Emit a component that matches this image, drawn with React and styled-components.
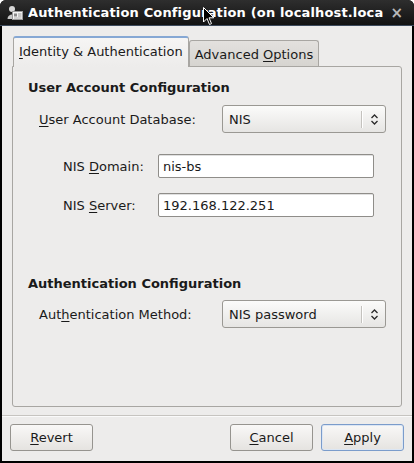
import React from "react";
import styled, { createGlobalStyle } from "styled-components";

const Global = createGlobalStyle`
  html, body { margin: 0; padding: 0; background: #ffffff; }
  #root { width: 414px; height: 463px; }
  * { box-sizing: border-box; }
`;

const Window = styled.div`
  position: relative;
  width: 414px;
  height: 463px;
  background: #000;
  border-radius: 6px 6px 0 0;
  display: flex;
  flex-direction: column;
  overflow: hidden;
  font-family: "DejaVu Sans", "Liberation Sans", sans-serif;
  font-size: 13px;
  color: #1a1a1a;
`;

const TitleBar = styled.div`
  height: 26px;
  flex: none;
  display: flex;
  align-items: center;
  padding: 0 8px 0 7px;
  background: linear-gradient(#2e2e2e, #121212);
  border-bottom: 1px solid #3c4a5c;
  color: #fff;
`;

const TitleText = styled.div`
  width: 360px;
  flex: none;
  margin-left: 5px;
  font-weight: bold;
  font-size: 13px;
  white-space: nowrap;
  overflow: hidden;
  letter-spacing: 0.15px;
`;

const Close = styled.div`
  flex: 1;
  color: #b8b8b8;
  font-size: 15px;
  font-weight: bold;
  text-align: right;
  padding-right: 3px;
`;

const Body = styled.div`
  flex: 1;
  margin: 0 2px 2px;
  background: #edeceb;
  display: flex;
  flex-direction: column;
  padding: 10px 8px 10px;
`;

const Notebook = styled.div`
  flex: 1;
  margin: 0 2px;
  display: flex;
  flex-direction: column;
`;

const TabRow = styled.div`
  display: flex;
  align-items: flex-end;
  padding-left: 1px;
  position: relative;
  z-index: 1;
`;

const Tab = styled.div`
  padding: 0 5px;
  border: 1px solid #a8a6a2;
  border-bottom: none;
  border-radius: 3px 3px 0 0;
  display: flex;
  align-items: center;
  white-space: nowrap;
  height: ${(p) => (p.$active ? "31px" : "26px")};
  margin-bottom: ${(p) => (p.$active ? "-1px" : "0")};
  background: ${(p) =>
    p.$active ? "linear-gradient(#f6f5f4, #edeceb)" : "linear-gradient(#e3e1de, #d6d4d0)"};
  border-top: ${(p) => (p.$active ? "2px solid #86a8d4" : "1px solid #a8a6a2")};
  padding-top: ${(p) => (p.$active ? "0" : "2px")};
  padding-bottom: ${(p) => (p.$active ? "3px" : "0")};
`;

const Panel = styled.div`
  flex: 1;
  border: 1px solid #a8a6a2;
  border-radius: 0 3px 3px 3px;
  background: #edeceb;
  padding: 13px 15px 0;
  display: flex;
  flex-direction: column;
`;

const Heading = styled.div`
  font-weight: bold;
  height: 16px;
  line-height: 16px;
  margin-top: ${(p) => p.$top || 0}px;
`;

const Row = styled.div`
  display: flex;
  align-items: center;
  padding-left: ${(p) => p.$indent}px;
  margin-top: ${(p) => p.$top}px;
`;

const Label = styled.div`
  width: ${(p) => p.$w}px;
  flex: none;
  white-space: nowrap;
`;

const Mn = styled.span`
  text-decoration: underline;
  text-underline-offset: 2px;
  text-decoration-thickness: 1px;
`;

const Combo = styled.div`
  width: 164px;
  height: 28px;
  border: 1px solid #9a9893;
  border-radius: 3px;
  background: linear-gradient(#fbfbfa, #e6e5e3);
  display: flex;
  align-items: center;
  padding-left: 6px;
`;

const ComboText = styled.div`
  flex: 1;
`;

const ComboSep = styled.div`
  width: 1px;
  height: 17px;
  background: #c4c2be;
  border-right: 1px solid #fff;
  box-sizing: content-box;
`;

const ComboArrow = styled.div`
  width: 22px;
  display: flex;
  justify-content: center;
  align-items: center;
`;

const Entry = styled.div`
  width: 216px;
  height: 24px;
  border: 1px solid #8f8d89;
  border-radius: 2px;
  background: #fff;
  display: flex;
  align-items: center;
  padding-left: 4px;
  box-shadow: inset 0 1px 0 #e0e0e0;
`;

const Separator = styled.div`
  height: 2px;
  margin: 8px -8px 7px;
  border-top: 1px solid #c6c4c0;
  border-bottom: 1px solid #fafafa;
`;

const ButtonRow = styled.div`
  display: flex;
  gap: 8px;
  height: 27px;
`;

const Spacer = styled.div`
  flex: 1;
`;

const Button = styled.div`
  width: 83px;
  height: 27px;
  border: 1px solid ${(p) => (p.$focus ? "#7b9ccb" : "#96948f")};
  border-radius: 3px;
  background: linear-gradient(#f9f8f7, #e5e3e0);
  display: flex;
  align-items: center;
  justify-content: center;
  box-shadow: ${(p) => (p.$focus ? "inset 0 0 0 1px #dce6f3" : "none")};
`;

const Cursor = styled.svg`
  position: absolute;
  left: 203px;
  top: 7px;
`;

const UpDown = () => (
  <svg width="9" height="13" viewBox="0 0 9 13">
    <path d="M1.5 5 L4.5 2 L7.5 5" fill="none" stroke="#2a2a2a" strokeWidth="1.3" />
    <path d="M1.5 8 L4.5 11 L7.5 8" fill="none" stroke="#2a2a2a" strokeWidth="1.3" />
  </svg>
);

const AppIcon = () => (
  <svg width="16" height="16" viewBox="0 0 16 16">
    <circle cx="5" cy="4" r="3" fill="#d8d8d8" />
    <path d="M0.5 14 C0.5 8 9.5 8 9.5 14 Z" fill="#c8c8c8" />
    <rect x="5.5" y="6.5" width="10" height="8" fill="#f4f4f4" stroke="#9a9a9a" />
    <rect x="7" y="8.5" width="3" height="3" fill="#8a8a8a" />
    <rect x="11" y="8.5" width="3.5" height="1" fill="#9a9a9a" />
    <rect x="11" y="10.5" width="3.5" height="1" fill="#9a9a9a" />
    <rect x="7" y="12.5" width="7.5" height="1" fill="#b0b0b0" />
  </svg>
);

export default function App() {
  return (
    <>
      <Global />
      <Window>
        <TitleBar>
          <AppIcon />
          <TitleText>Authentication Configuration (on localhost.loca</TitleText>
          <Close>×</Close>
        </TitleBar>
        <Body>
          <Notebook>
            <TabRow>
              <Tab $active>
                <span>
                  <Mn>I</Mn>dentity &amp; Authentication
                </span>
              </Tab>
              <Tab>
                <span>
                  Advanced <Mn>O</Mn>ptions
                </span>
              </Tab>
            </TabRow>
            <Panel>
              <Heading>User Account Configuration</Heading>
              <Row $indent={11} $top={9}>
                <Label $w={183}>
                  <Mn>U</Mn>ser Account Database:
                </Label>
                <Combo>
                  <ComboText>NIS</ComboText>
                  <ComboSep />
                  <ComboArrow>
                    <UpDown />
                  </ComboArrow>
                </Combo>
              </Row>
              <Row $indent={35} $top={21}>
                <Label $w={95}>
                  NIS <Mn>D</Mn>omain:
                </Label>
                <Entry>nis-bs</Entry>
              </Row>
              <Row $indent={35} $top={15}>
                <Label $w={95}>
                  NIS <Mn>S</Mn>erver:
                </Label>
                <Entry>192.168.122.251</Entry>
              </Row>
              <Heading $top={59}>Authentication Configuration</Heading>
              <Row $indent={11} $top={8}>
                <Label $w={183}>
                  Aut<Mn>h</Mn>entication Method:
                </Label>
                <Combo>
                  <ComboText>NIS password</ComboText>
                  <ComboSep />
                  <ComboArrow>
                    <UpDown />
                  </ComboArrow>
                </Combo>
              </Row>
            </Panel>
          </Notebook>
          <Separator />
          <ButtonRow>
            <Button>
              <span>
                <Mn>R</Mn>evert
              </span>
            </Button>
            <Spacer />
            <Button>
              <span>
                <Mn>C</Mn>ancel
              </span>
            </Button>
            <Button $focus>
              <span>
                <Mn>A</Mn>pply
              </span>
            </Button>
          </ButtonRow>
        </Body>
        <Cursor width="12" height="20" viewBox="0 0 12 20">
          <path d="M0.5 0.5 L0.5 15 L4 11.5 L6.5 17.5 L8.5 16.6 L6 10.8 L10.8 10.8 Z" fill="#000" stroke="#fff" strokeWidth="1" />
        </Cursor>
      </Window>
    </>
  );
}
